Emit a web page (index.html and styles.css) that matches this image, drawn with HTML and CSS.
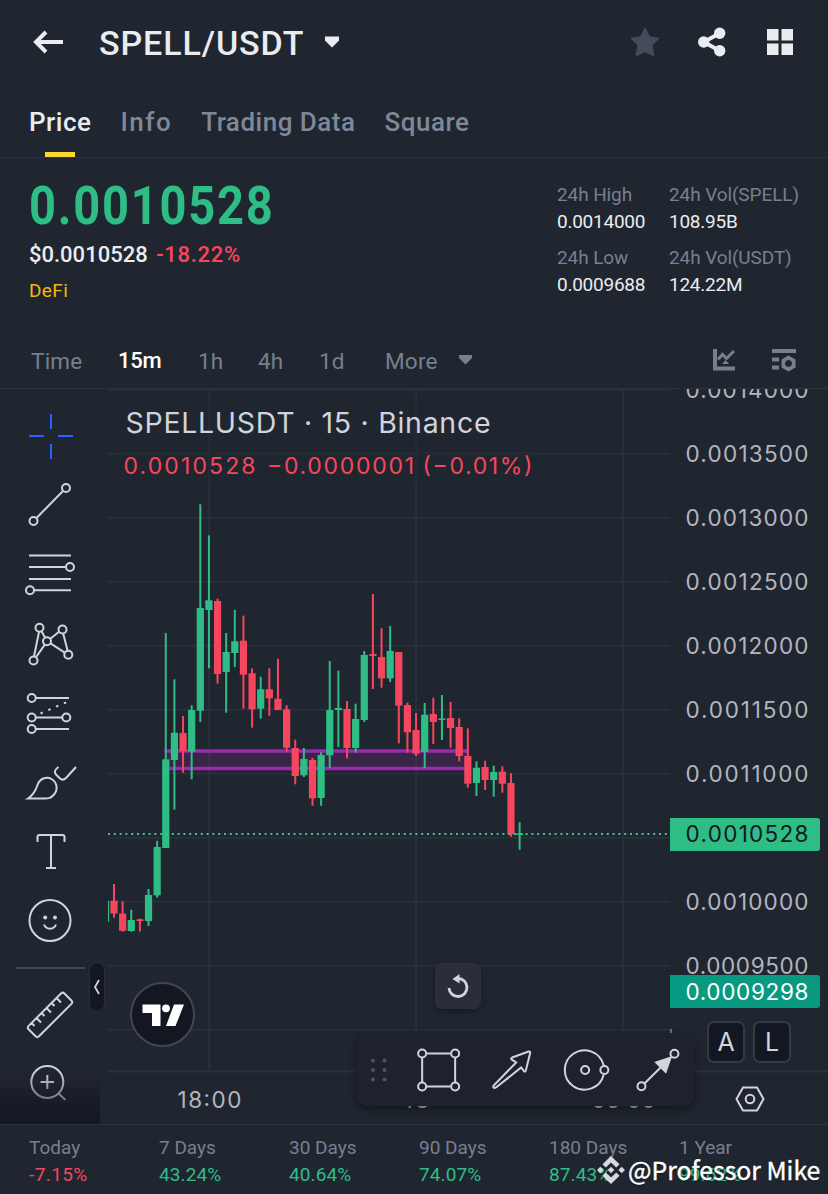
FILE: index.html
```html
<!DOCTYPE html>
<html lang="en">
<head>
<meta charset="UTF-8" />
<meta name="viewport" content="width=device-width, initial-scale=1" />
<title>SPELL/USDT</title>
<link rel="stylesheet" href="styles.css">
</head>
<body>
<header class="header">
  <svg class="back" width="32" height="28" viewBox="0 0 32 28"><path d="M14 4 4 14l10 10M4 14h27" fill="none" stroke="currentColor" stroke-width="4"/></svg>
  <h1>SPELL/USDT</h1>
  <svg class="caret" width="16" height="12" viewBox="0 0 16 12"><path d="M1 .5h14v4l-7 7-7-7z" fill="currentColor"/></svg>
  <div class="actions">
    <svg class="star" width="30" height="30" viewBox="0 0 30 30"><path d="M15 2l4 8.300 9 1.200-6.500 6.400L23.300 28 15 24.200 6.700 28l1.800-10.100L2 11.500l9-1.200z" fill="currentColor" stroke="currentColor" stroke-width="2" stroke-linejoin="round"/></svg>
    <svg width="30" height="30" viewBox="0 0 30 30"><path d="M21.700 6.200 5.700 15l16 8.800" fill="none" stroke="currentColor" stroke-width="4"/><circle cx="21.700" cy="6.200" r="5.700" fill="currentColor"/><circle cx="5.700" cy="15" r="5.700" fill="currentColor"/><circle cx="21.700" cy="23.800" r="5.700" fill="currentColor"/></svg>
    <svg width="30" height="30" viewBox="0 0 30 30"><path d="M2 2h11.500v11.500H2zM16.500 2H28v11.500H16.500zM2 16.500h11.500V28H2zM16.500 16.500H28V28H16.500z" fill="currentColor"/></svg>
  </div>
</header>

<nav class="tabs">
  <span class="tab active">Price</span>
  <span class="tab info">Info</span>
  <span class="tab">Trading Data</span>
  <span class="tab">Square</span>
</nav>

<section class="summary">
  <div class="quote">
    <div class="last">0.0010528</div>
    <div class="fiat">$0.0010528 <span class="down">-18.22%</span></div>
    <div class="tag">DeFi</div>
  </div>
  <dl class="stats">
    <div><dt>24h High</dt><dd>0.0014000</dd></div>
    <div><dt>24h Vol(SPELL)</dt><dd>108.95B</dd></div>
    <div><dt>24h Low</dt><dd>0.0009688</dd></div>
    <div><dt>24h Vol(USDT)</dt><dd>124.22M</dd></div>
  </dl>
</section>

<nav class="intervals">
  <span class="time">Time</span>
  <span class="m15 active">15m</span>
  <span class="h1">1h</span>
  <span class="h4">4h</span>
  <span class="d1">1d</span>
  <span class="more">More</span>
  <svg class="more-caret" width="13" height="10" viewBox="0 0 13 10"><path d="M0 0h13v3L6.500 9.500 0 3z" fill="currentColor"/></svg>
  <div class="chart-actions">
    <svg width="22" height="22" viewBox="0 0 22 22"><path d="M2 0v19.500h20" fill="none" stroke="currentColor" stroke-width="4"/><path d="M5 10.500 9.500 5.500l4 4L21 2" fill="none" stroke="currentColor" stroke-width="3"/><path d="M9 15l3.500-4 3.500 4z" fill="currentColor"/></svg>
    <svg width="24" height="24" viewBox="0 0 24 24"><path d="M0 1h24v4H0zM0 9.500h7v4H0zM0 17.500h7v4H0z" fill="currentColor"/><path fill-rule="evenodd" d="M16.500 7.500l7 4v8l-7 4-7-4v-8zM16.500 12a3.500 3.500 0 1 0 .01 0z" fill="currentColor"/></svg>
  </div>
</nav>

<main class="workspace">
  <aside class="toolbar">
    <svg class="tool cross" viewBox="0 0 60 60"><path d="M31 8v15M31 38v15M9 30h15M38 30h15"/></svg>
    <svg class="tool" viewBox="0 0 60 60"><path d="M16.500 43 43 16"/><circle cx="46" cy="13" r="4"/><circle cx="13.500" cy="46" r="4"/></svg>
    <svg class="tool" viewBox="0 0 60 60"><path d="M9 11.500h42M9 23h37M9 35h42M14 46.300h37"/><circle cx="50" cy="23" r="4"/><circle cx="10" cy="46.300" r="4"/></svg>
    <svg class="tool" viewBox="0 0 60 60"><path d="M19 18l-5 24.500M21.500 17.200l3.700 6.500M30.300 24.800l8.800-7M43.200 19.500l4.400 17.200M30.500 29.300l14.300 9.300M24.800 30.600 16 43.200"/><circle cx="19.500" cy="13.700" r="4"/><circle cx="42.500" cy="15.500" r="4"/><circle cx="27" cy="27.300" r="4"/><circle cx="13.500" cy="46.500" r="4"/><circle cx="48.300" cy="40.700" r="4"/></svg>
    <svg class="tool" viewBox="0 0 60 60"><path d="M16 15h33M16 34.500h26M16 46h33"/><path d="M20.500 30.500 48 18.500" stroke-dasharray="2.500 6"/><circle cx="11.700" cy="15" r="4"/><circle cx="11.700" cy="34.500" r="4"/><circle cx="46.300" cy="34.500" r="4"/><circle cx="11.700" cy="46" r="4"/></svg>
    <svg class="tool" viewBox="0 0 60 60"><path d="M8 46.500c6-4 8-9 9.500-13.500 2.500-7.500 10-8.500 14-6 6 3.500 6.500 11 2.500 15.500-3 3.500-5 4-10 4z"/><path d="M56 15 46 26c-2 2-4.500 2-6.500 0L36 22.500c-2-2-1.500-5 2.500-7.500"/></svg>
    <svg class="tool" viewBox="0 0 60 60"><path d="M17.500 21v-5q0-2 2-2h23q2 0 2 2v5M31 14v33M26 47h10"/></svg>
    <svg class="tool" viewBox="0 0 60 60"><circle cx="30" cy="30.500" r="20.500"/><path d="M24 34.500c2 5.500 10 5.500 12 0"/><circle class="dot" cx="25.200" cy="27.500" r="2"/><circle class="dot" cx="35" cy="27.500" r="2"/></svg>
    <hr>
    <svg class="tool" viewBox="0 0 60 60"><path d="M41 8.500q1.700-1.700 3.400 0l7 7q1.700 1.700 0 3.400L19 51.300q-1.700 1.700-3.400 0l-7-7q-1.700-1.700 0-3.400zM36.500 13l4.500 4.500M31.500 18l3 3M26.500 23l4.500 4.500M21.500 28l3 3M16.500 33l4.500 4.500M11.500 38l3 3"/></svg>
    <svg class="tool" viewBox="0 0 60 60"><circle cx="27.300" cy="28" r="16"/><path d="M20.500 28h13.500M27.300 21v14M38.500 39.500l7 6.500"/></svg>
    <div class="fade"></div>
  </aside>

  <div class="chart">
    <svg id="plot" width="728" height="735" viewBox="100 389 728 735">
      <g id="grid"></g>
      <g class="zone">
        <rect x="164.500" y="751" width="304" height="17.500"/>
        <path d="M164.500 751h304M164.500 768.500h304"/>
      </g>
      <g id="candles"></g>
      <path class="last-line" d="M108 834h562"/>
      <g id="axis"></g>
      <rect class="legend-bg" x="116" y="397" width="424" height="86"/>
      <text class="symbol" x="125.500" y="432.500" textLength="365">SPELLUSDT · 15 · Binance</text>
      <text class="change" x="123.500" y="473.500" textLength="132">0.0010528</text>
      <text class="change" x="267" y="473.500" textLength="147">−0.0000001</text>
      <text class="change" x="422.500" y="473.500" textLength="110">(−0.01%)</text>
      <path class="tag-last" d="M670 818h147q3 0 3 3v27q0 3-3 3H670z"/>
      <text class="price dark" x="685.500" y="842" textLength="123">0.0010528</text>
      <path class="tag-low" d="M670 975h147q3 0 3 3v27q0 3-3 3H670z"/>
      <text class="price light" x="685.500" y="999.500" textLength="123">0.0009298</text>
      <path class="hex" d="M743 1087.500h14l6.500 11.500-6.500 11.500h-14L736.500 1099z"/>
      <circle class="hex" cx="750" cy="1099" r="4.300"/>
      <path class="tick" d="M671 1029v6"/>
    </svg>

    <div class="collapse">
      <svg width="8" height="16" viewBox="0 0 8 16"><path d="M6 1 2 8l4 7" fill="none" stroke="currentColor" stroke-width="1.800"/></svg>
    </div>
    <div class="tv-logo">
      <svg width="44" height="24" viewBox="0 0 44 24"><path d="M1.500 1.500h18v21.500H11V10H1.500zM33 1.500h10L34.500 23h-9.500z" fill="#fff"/><circle cx="25" cy="5.300" r="3.900" fill="#fff"/></svg>
    </div>
    <div class="reset">
      <svg width="24" height="26" viewBox="0 0 24 26"><path d="M3 15a9 9 0 1 0 9-9.500" fill="none" stroke="currentColor" stroke-width="2.800"/><path d="M13.500 1v9.500L6.500 6z" fill="currentColor"/></svg>
    </div>
    <div class="scale">
      <span>A</span>
      <span>L</span>
    </div>
    <div class="shapes">
      <svg class="grip" viewBox="0 0 46 73"><circle cx="17" cy="27.500" r="2"/><circle cx="28.500" cy="27.500" r="2"/><circle cx="17" cy="37" r="2"/><circle cx="28.500" cy="37" r="2"/><circle cx="17" cy="46.500" r="2"/><circle cx="28.500" cy="46.500" r="2"/></svg>
      <svg class="shape" viewBox="0 0 73 73"><path d="M24.500 20.500h24M24.500 53.500h24M20 25v24M53 25v24"/><circle cx="20" cy="20.500" r="4"/><circle cx="53" cy="20.500" r="4"/><circle cx="20" cy="53.500" r="4"/><circle cx="53" cy="53.500" r="4"/></svg>
      <svg class="shape" viewBox="0 0 73 73"><path d="M53.500 18.500 37 24.500q-1.800 1-.3 2.200l4.300 2.800-22.500 23q-1 1.800.5 2.300 1 .4 2.500-.8L46 34.500l3 3.800q1 1 1.700-.8L55 20q.2-2-1.500-1.500z"/></svg>
      <svg class="shape" viewBox="0 0 73 73"><path d="M54.500 32.300A19.700 19.700 0 1 0 54.500 41.700"/><circle cx="36" cy="37" r="4"/><circle cx="55.200" cy="37" r="4"/></svg>
      <svg class="shape" viewBox="0 0 73 73"><path d="M22.300 50.500 42 31"/><path class="head" d="M48.500 24.500 43.500 39 34 29.500z"/><circle cx="52.300" cy="20.700" r="4"/><circle cx="19.300" cy="53.300" r="4"/></svg>
    </div>
  </div>
</main>

<footer class="returns">
  <div><span>Today</span><b class="down">-7.15%</b></div>
  <div><span>7 Days</span><b>43.24%</b></div>
  <div><span>30 Days</span><b>40.64%</b></div>
  <div><span>90 Days</span><b>74.07%</b></div>
  <div><span>180 Days</span><b>87.43%</b></div>
  <div><span>1 Year</span><b>99.62%</b></div>
</footer>

<div class="watermark">
  <svg width="28" height="28" viewBox="0 0 28 28"><path d="M14 0l8.500 8.300-3.300 3.300L14 6.500l-5.200 5.100-3.300-3.300zM14 28l-8.500-8.300 3.300-3.300 5.200 5.100 5.200-5.100 3.300 3.300zM3.300 10.700 6.600 14l-3.300 3.300L0 14zM24.700 10.700 28 14l-3.300 3.300-3.300-3.300zM14 10.700l3.300 3.300-3.300 3.300-3.300-3.300z" fill="#d9d9d9"/></svg>
  <span>@Professor Mike</span>
</div>

<script>
  const NS = 'http://www.w3.org/2000/svg';
  const step = 8.63;
  const firstX = 114;

  // [up, high, body top, body bottom, low]
  const candles = [
    [0, 884, 900.7, 913.5, 917.7], [0, 901.3, 913.5, 930.8, 931.7], [1, 909.7, 920, 931, 931.8],
    [0, 918.5, 919.3, 921, 931.5], [1, 889, 895, 921, 926], [1, 840.8, 847, 895.3, 897.7],
    [1, 633, 759.3, 848, 848], [1, 679.3, 732.7, 760, 809.7], [0, 716, 733, 751.3, 772.7],
    [1, 705.3, 710, 751.7, 779.3], [1, 504.3, 608, 710.7, 722], [1, 535.3, 600.3, 610, 668.3],
    [0, 598.7, 601, 674, 683.7], [1, 633, 652, 672, 712.7], [1, 610, 641.3, 653, 667],
    [0, 615.7, 640.7, 674.7, 708.7], [0, 668.3, 673.3, 709.3, 727.7], [1, 676.7, 689.3, 708.7, 718.7],
    [0, 668.3, 689.3, 698.3, 715.7], [0, 658.7, 698.7, 710, 710], [0, 705.3, 709.3, 747.7, 751.7],
    [0, 739.7, 748, 776, 784.3], [1, 748, 759, 775.3, 777], [0, 758, 760, 798.3, 805.7],
    [1, 752.3, 755, 798, 805.7], [1, 661, 710, 755.3, 768], [1, 670.7, 708, 710, 747],
    [0, 701, 709, 748, 758.3], [1, 703.7, 719, 748, 752.7], [1, 651, 655, 720, 722],
    [0, 594, 654, 656, 689], [0, 628.3, 657, 678.3, 687.7], [1, 626, 651, 678.3, 682],
    [0, 652, 652, 705.7, 743.3], [0, 702.7, 705, 732.3, 752.7], [0, 713, 730, 753.7, 756],
    [1, 703, 714.7, 752, 768], [0, 697.7, 714, 722, 744], [1, 695, 718.5, 720, 740],
    [0, 702, 718, 728, 747.7], [0, 718.3, 727, 756, 761.3], [0, 728.3, 756, 783.7, 787.7],
    [1, 761.3, 767.7, 783, 796], [0, 760.7, 767, 780, 790], [1, 765.7, 772, 780, 796.7],
    [0, 766.3, 771.7, 783.7, 792.7], [0, 773.3, 783, 834.3, 836.7], [1, 822.3, 833.5, 835, 849.7]
  ];

  const prices = ['0.0014000', '0.0013500', '0.0013000', '0.0012500', '0.0012000', '0.0011500',
    '0.0011000', '0.0010500', '0.0010000', '0.0009500'];
  const times = [[209, '18:00', 64], [416, '13', 26], [623, '06:00', 64]];

  function add(parent, tag, attrs, text) {
    const el = document.createElementNS(NS, tag);
    for (const key in attrs) el.setAttribute(key, attrs[key]);
    if (text) el.textContent = text;
    document.getElementById(parent).appendChild(el);
  }

  // grid
  for (let i = 0; i < 11; i++) {
    const y = 389.7 + i * 64;
    add('grid', 'path', { d: `M108 ${y}H670` });
  }
  times.forEach(([x]) => add('grid', 'path', { d: `M${x} 389V1071` }));
  add('grid', 'path', { d: 'M108 1071.500H828' });

  // candles
  add('candles', 'rect', { class: 'up', x: 108, y: 901, width: 1.2, height: 20.5 });
  candles.forEach(([up, high, top, bottom, low], i) => {
    const x = firstX + i * step;
    const cls = up ? 'up' : 'down';
    add('candles', 'rect', { class: cls, x: x - 1, y: high, width: 2, height: low - high });
    add('candles', 'rect', { class: cls, x: x - 3.6, y: top, width: 7.2, height: bottom - top });
  });

  // axis labels
  prices.forEach((p, i) => {
    add('axis', 'text', { class: 'price', x: 685.5, y: 397.5 + i * 64, textLength: 123 }, p);
  });
  times.forEach(([x, label, w]) => {
    add('axis', 'text', { class: 'price', x: x - w / 2 + 0.5, y: 1107.5, textLength: w }, label);
  });
</script>
</body>
</html>
```
FILE: styles.css
```css
:root {
  --bg: #202630;
  --line: #2b323c;
  --text: #eaecef;
  --up: #2ebd85;
  --down: #f6465d;
  --dark: #131722;
  --icon: #d1d4dc;
}
* {
  box-sizing: border-box;
}
body {
  margin: 0;
  height: 1194px;
  overflow: hidden;
  position: relative;
  display: flex;
  flex-direction: column;
  background: var(--bg);
  color: var(--text);
  font-family: Roboto, sans-serif;
}
svg {
  display: block;
  flex: none;
}
.header {
  height: 84px;
  padding: 0 33px 0 32px;
  display: flex;
  align-items: center;
}
h1 {
  margin: 2px 0 0 35px;
  width: 225px;
  font-size: 34px;
  font-weight: 500;
  letter-spacing: 0.9px;
}
.actions {
  margin-left: auto;
  display: flex;
  gap: 37.5px;
}
.star {
  color: #434c5a;
}
.tabs {
  height: 74px;
  padding: 0 29px;
  display: flex;
  gap: 29px;
  border-bottom: 1px solid var(--line);
  color: #7f8897;
  font-size: 26px;
  font-weight: 500;
  line-height: 77px;
  letter-spacing: 0.5px;
}
.tab.info {
  letter-spacing: 1.5px;
}
.tab.active {
  color: var(--text);
  background: linear-gradient(#fcd535, #fcd535) center bottom / 30px 5px no-repeat;
}
.summary {
  height: 177px;
  padding: 0 30px 0 29px;
  display: flex;
  justify-content: space-between;
}
.quote {
  width: 280px;
}
.last {
  margin-top: 17px;
  color: var(--up);
  font-size: 53.5px;
  font-weight: 700;
  line-height: 62px;
  letter-spacing: 2px;
  /* narrow numerals */
  transform: scaleX(0.88);
  transform-origin: left;
}
.fiat {
  margin-top: 4px;
  font-size: 22px;
  font-weight: 500;
  line-height: 28px;
}
.down {
  color: var(--down);
}
.fiat .down {
  margin-left: 3px;
  letter-spacing: 0.7px;
}
.tag {
  margin-top: 10px;
  color: #f0b90b;
  font-size: 19px;
  line-height: 24px;
  letter-spacing: 0.4px;
}
.stats {
  margin: 23px 0 0;
  display: grid;
  grid-template-columns: 88px 129px;
  grid-auto-rows: 63px;
  column-gap: 24px;
  font-size: 19px;
  line-height: 27px;
  white-space: nowrap;
}
.stats dt {
  color: #76808f;
  letter-spacing: -0.1px;
}
.stats dd {
  margin: 0;
  letter-spacing: -0.25px;
}
.intervals {
  height: 54px;
  padding: 0 32px 2px 31px;
  display: flex;
  align-items: center;
  border-bottom: 1px solid var(--line);
  color: #76808f;
  font-size: 22.5px;
  letter-spacing: 0.2px;
}
.intervals .active {
  color: #fff;
  font-size: 22px;
  font-weight: 500;
  letter-spacing: -0.3px;
}
.time { width: 87px; }
.m15 { width: 80px; }
.h1 { width: 60px; }
.h4 { width: 61px; }
.d1 { width: 66px; }
.more { width: 74px; }
.more-caret,
.chart-actions {
  margin-bottom: 1px;
}
.chart-actions {
  margin-left: auto;
  display: flex;
  align-items: center;
  gap: 37px;
}
.workspace {
  height: 735px;
  display: flex;
}
.toolbar {
  position: relative;
  width: 100px;
  padding: 17px 0 0 20px;
  display: flex;
  flex-direction: column;
}
.tool {
  width: 60px;
  height: 60px;
  margin-bottom: 9.2px;
  fill: none;
  stroke: var(--icon);
  stroke-width: 2;
}
.tool.cross {
  stroke: #2962ff;
}
.tool .dot {
  fill: var(--icon);
  stroke: none;
}
.toolbar hr {
  flex: none;
  width: 69px;
  height: 2px;
  margin: 7px 0 16px -4px;
  border: 0;
  background: #434651;
}
.fade {
  position: absolute;
  left: 0;
  bottom: 0;
  width: 100px;
  height: 54px;
  background: linear-gradient(rgba(19, 20, 31, 0), rgba(19, 20, 31, 0.9));
}
.chart {
  position: relative;
  width: 728px;
}
#grid path {
  stroke: #2a313b;
  stroke-width: 1.8;
}
.legend-bg {
  fill: var(--bg);
  fill-opacity: 0.5;
}
.zone rect {
  fill: #9c27b0;
  fill-opacity: 0.2;
}
.zone path {
  stroke: #9c27b0;
  stroke-width: 3.6;
}
rect.up { fill: var(--up); }
rect.down { fill: var(--down); }
.last-line {
  stroke: #45c293;
  stroke-width: 2;
  stroke-dasharray: 2 3.8;
}
#plot text {
  font-family: Inter, sans-serif;
}
.price {
  fill: #b2b5be;
  font-size: 22.5px;
}
.price.dark { fill: #131722; }
.price.light { fill: #fff; }
.symbol {
  fill: var(--icon);
  font-size: 28.5px;
}
.change {
  fill: var(--down);
  font-size: 23px;
}
.tag-last { fill: var(--up); }
.tag-low { fill: #089981; }
.hex {
  fill: none;
  stroke: var(--icon);
  stroke-width: 2;
}
.tick {
  stroke: #8a8e98;
  stroke-width: 1.5;
}
.collapse {
  position: absolute;
  left: -11px;
  top: 573px;
  width: 16px;
  height: 50px;
  display: grid;
  place-items: center;
  border: 1px solid #2a2e39;
  border-radius: 8px;
  background: var(--dark);
  color: var(--icon);
}
.tv-logo {
  position: absolute;
  left: 30px;
  top: 593px;
  width: 65px;
  height: 65px;
  display: grid;
  place-items: center;
  border: 2px solid #434651;
  border-radius: 50%;
  background: var(--dark);
}
.reset {
  position: absolute;
  left: 335px;
  top: 574px;
  width: 46px;
  height: 46px;
  display: grid;
  place-items: center;
  border-radius: 7px;
  background: #2a2e39;
  color: var(--icon);
  box-shadow: 0 3px 6px rgba(0, 0, 0, 0.3);
}
.scale {
  position: absolute;
  left: 607px;
  top: 632px;
  display: flex;
  gap: 8px;
}
.scale span {
  width: 38px;
  height: 42px;
  border: 2px solid #363a45;
  border-radius: 7px;
  background: var(--dark);
  color: var(--icon);
  font: 25px/39px Inter, sans-serif;
  text-align: center;
}
.shapes {
  position: absolute;
  left: 256px;
  top: 644px;
  width: 339px;
  height: 73px;
  display: flex;
  border-radius: 12px;
  background: #1e222d;
  box-shadow: 0 3px 8px rgba(0, 0, 0, 0.45);
}
.grip {
  width: 46px;
  fill: #50535e;
}
.shape {
  width: 73.3px;
  fill: none;
  stroke: var(--icon);
  stroke-width: 2;
}
.shape .head {
  fill: var(--icon);
}
.returns {
  height: 70px;
  padding: 10px 0 0 29px;
  display: flex;
  border-top: 1px solid var(--line);
  color: #76808f;
  font-size: 19px;
  line-height: 26.5px;
}
.returns div {
  width: 130px;
  flex: none;
  display: flex;
  flex-direction: column;
}
.returns b {
  color: var(--up);
  font-weight: 400;
  letter-spacing: 0.1px;
}
.returns b.down {
  color: var(--down);
  letter-spacing: 0.4px;
}
.watermark {
  position: absolute;
  left: 597px;
  top: 1151px;
  display: flex;
  align-items: center;
  gap: 3px;
  color: #fff;
  font: 400 24.8px/37px "Noto Sans CJK SC", sans-serif;
  white-space: nowrap;
  -webkit-text-stroke: 0.4px #fff;
  text-shadow: 0 1px 2px rgba(0, 0, 0, 0.5);
}
```
